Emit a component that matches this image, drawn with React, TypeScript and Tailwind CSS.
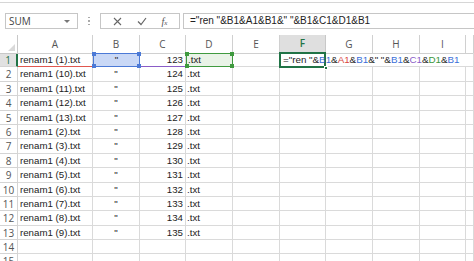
import React from "react";

const COLS = "grid-cols-[18px_75px_47px_46px_47px_47px_46px_47px_47px_46px_1fr]";
const LETTERS = ["A", "B", "C", "D", "E", "F", "G", "H", "I", ""];

const rows = [
  ["renam1 (1).txt", 123],
  ["renam1 (10).txt", 124],
  ["renam1 (11).txt", 125],
  ["renam1 (12).txt", 126],
  ["renam1 (13).txt", 127],
  ["renam1 (2).txt", 128],
  ["renam1 (3).txt", 129],
  ["renam1 (4).txt", 130],
  ["renam1 (5).txt", 131],
  ["renam1 (6).txt", 132],
  ["renam1 (7).txt", 133],
  ["renam1 (8).txt", 134],
  ["renam1 (9).txt", 135],
] as const;

const cell = "border-r border-b border-[#dadada] h-[14.4px] leading-[14px] overflow-hidden whitespace-nowrap";
const rowHead =
  "border-r border-b border-[#d4d4d4] bg-white text-[#555] text-center text-[10px] h-[14.4px] leading-[14px]";

function Handles({ color }: { color: string }) {
  const pos = ["-top-[2px] -left-[2px]", "-top-[2px] -right-[2px]", "-bottom-[2px] -left-[2px]", "-bottom-[2px] -right-[2px]"];
  return (
    <>
      {pos.map((p) => (
        <span key={p} className={`absolute ${p} w-[4px] h-[4px] ${color}`} />
      ))}
    </>
  );
}

function FormulaText({ colored }: { colored: boolean }) {
  const blue = colored ? "text-[#3a6fd8]" : "";
  const red = colored ? "text-[#d9473f]" : "";
  const purple = colored ? "text-[#8a5cc7]" : "";
  const green = colored ? "text-[#3b963b]" : "";
  return (
    <span className="relative">
      ="ren "&amp;<span className={blue}>B1</span>&amp;<span className={red}>A1</span>&amp;
      <span className={blue}>B1</span>&amp;" "&amp;<span className={blue}>B1</span>&amp;
      <span className={purple}>C1</span>&amp;<span className={green}>D1</span>&amp;
      <span className={blue}>B1</span>
    </span>
  );
}

export default function App() {
  return (
    <div className="w-[474px] h-[261px] overflow-hidden bg-white text-[#222] font-['Liberation_Sans',Arial,sans-serif]">
      {/* toolbar */}
      <div className="h-[33px] border-t border-[#d6d6d6] mt-[2px] flex items-start pt-[10px] pl-[5px]">
        <div className="w-[73px] h-[16px] border border-[#c6c6c6] flex items-center justify-between px-[3px] text-[10px] text-[#444] font-['Open_Sans',sans-serif]">
          <span>SUM</span>
          <span className="w-0 h-0 border-l-[3px] border-r-[3px] border-t-[3px] border-l-transparent border-r-transparent border-t-[#777] mr-[4px]" />
        </div>
        <div className="w-[22px] h-[16px] flex flex-col items-center justify-center gap-[2px]">
          <span className="w-[1.5px] h-[1.5px] bg-[#aaa]" />
          <span className="w-[1.5px] h-[1.5px] bg-[#aaa]" />
          <span className="w-[1.5px] h-[1.5px] bg-[#aaa]" />
        </div>
        <div className="w-[80px] h-[16px] border border-[#c6c6c6] flex items-center justify-around px-[4px] text-[#666]">
          <svg width="9" height="9" viewBox="0 0 9 9">
            <path d="M1 1 L8 8 M8 1 L1 8" stroke="#666" strokeWidth="1.1" />
          </svg>
          <svg width="10" height="9" viewBox="0 0 10 9">
            <path d="M1 4.5 L4 7.5 L9 1" stroke="#666" strokeWidth="1.2" fill="none" />
          </svg>
          <span className="italic text-[10px] font-['Liberation_Serif',serif] text-[#555]">
            f<span className="text-[7px]">x</span>
          </span>
        </div>
        <div className="ml-[3px] flex-1 h-[16px] border-l border-t border-b border-[#c6c6c6] pl-[6px] text-[10px] leading-[14px] text-[#222] whitespace-nowrap">
          <FormulaText colored={false} />
        </div>
      </div>

      {/* column headers */}
      <div className={`grid ${COLS} h-[18px] text-[10px] font-['Open_Sans',sans-serif]`}>
        <div className="relative border-r border-b border-[#c8c8c8]">
          <svg className="absolute right-[2px] bottom-[2px]" width="7" height="7" viewBox="0 0 7 7">
            <path d="M7 0 L7 7 L0 7 Z" fill="#d9d9d9" />
          </svg>
        </div>
        {LETTERS.map((l, i) =>
          l === "F" ? (
            <div
              key={i}
              className="bg-[#dfdfdf] border-r border-[#c8c8c8] border-b-2 border-b-[#217346] text-[#217346] font-semibold text-center leading-[17px]"
            >
              F
            </div>
          ) : (
            <div key={i} className="border-r border-b border-[#d0d0d0] text-[#555] text-center leading-[18px]">
              {l}
            </div>
          )
        )}
      </div>

      {/* rows */}
      <div className="text-[9.7px]">
        {rows.map(([name, num], i) => {
          const first = i === 0;
          return (
            <div key={i} className={`grid ${COLS}`}>
              <div
                className={
                  first
                    ? "bg-[#e1e1e1] border-r-2 border-r-[#217346] border-b border-[#d4d4d4] text-[#217346] text-center text-[10px] h-[14.4px] leading-[14px] font-['Open_Sans',sans-serif]"
                    : `${rowHead} font-['Open_Sans',sans-serif]`
                }
              >
                {i + 1}
              </div>
              <div className={`${cell} pl-[2px] ${first ? "border-b-[1.5px] border-b-[#e0574f]" : ""}`}>{name}</div>
              {first ? (
                <div className="relative h-[14.4px] bg-[#c9d8f6] border border-[#4b79d6] text-center leading-[12px]">
                  "
                  <Handles color="bg-[#4b79d6]" />
                </div>
              ) : (
                <div className={`${cell} text-center`}>"</div>
              )}
              <div className={`${cell} text-right pr-[2px] ${first ? "border-b-[1.5px] border-b-[#8a5cc7]" : ""}`}>{num}</div>
              {first ? (
                <div className="relative h-[14.4px] bg-[#e9f3e7] border border-[#3f9a3f] pl-[1px] leading-[12px]">
                  .txt
                  <Handles color="bg-[#3f9a3f]" />
                </div>
              ) : (
                <div className={`${cell} pl-[1px]`}>.txt</div>
              )}
              <div className={cell} />
              {first ? (
                <div className="col-span-4 relative h-[14.4px] border-b border-[#dadada] leading-[14px] whitespace-nowrap pl-[3px] text-[9.8px]">
                  <span className="absolute -left-[1px] -top-[1px] w-[47px] h-[16px] border-2 border-[#217346]" />
                  <span className="absolute left-[44px] top-[13px] w-[4px] h-[4px] bg-[#217346] border border-white" />
                  <FormulaText colored />
                </div>
              ) : (
                <>
                  <div className={cell} />
                  <div className={cell} />
                  <div className={cell} />
                  <div className={cell} />
                </>
              )}
              <div className={cell} />
            </div>
          );
        })}
        {[14, 15].map((n) => (
          <div key={n} className={`grid ${COLS}`}>
            <div className={`${rowHead} font-['Open_Sans',sans-serif]`}>{n}</div>
            {LETTERS.map((_, j) => (
              <div key={j} className={cell} />
            ))}
          </div>
        ))}
      </div>
    </div>
  );
}
